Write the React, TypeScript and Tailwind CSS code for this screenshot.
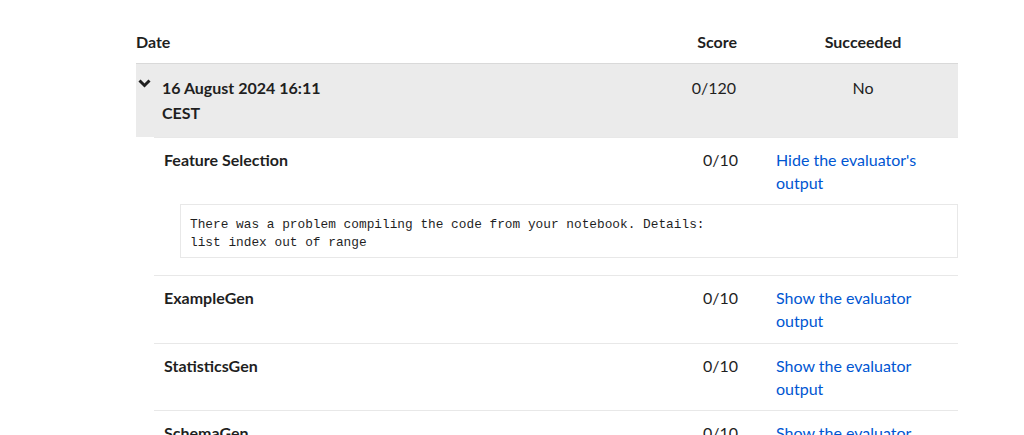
import React from "react";

const font = { fontFamily: 'Lato, "Open Sans", sans-serif' };

function SubRow({ name, link, children }: { name: string; link: string; children?: React.ReactNode }) {
  return (
    <div className="border-t border-[#e8e8e8] pt-[10px] pb-[10.5px]">
      <div className="flex">
        <div className="flex-1 pl-[10px] font-bold text-[16px] leading-[23px] text-[#1f1f1f]">{name}</div>
        <div className="w-[100px] text-right text-[16px] leading-[23px] text-[#1f1f1f]">0/10</div>
        <div className="w-[220px] pl-[38px] text-[16px] leading-[23px] text-[#0056d2]">{link}</div>
      </div>
      {children}
    </div>
  );
}

export default function App() {
  return (
    <div className="w-[1024px] h-[435px] overflow-hidden bg-white" style={font}>
      <div className="ml-[136px] w-[822px]">
        <div className="flex h-[63px] items-end pb-[9px] text-[16px] leading-[24px] font-bold text-[#1f1f1f]">
          <div className="flex-1">Date</div>
          <div className="w-[100px] text-right">Score</div>
          <div className="w-[221px] text-center pl-[31px]">Succeeded</div>
        </div>
        <div className="bg-[#ebebeb] border-t border-[#d9d9d9]">
          <div className="flex pt-[11px] pb-[12px] text-[16px] leading-[25px] text-[#1f1f1f]">
            <div className="w-[26px] pl-[2px] pt-[4px]">
              <svg width="13" height="9" viewBox="0 0 13 9">
                <path d="M1.5 1.5 L6.5 6.5 L11.5 1.5" fill="none" stroke="#1f1f1f" strokeWidth="3" />
              </svg>
            </div>
            <div className="flex-1 font-bold">
              16 August 2024 16:11
              <br />
              CEST
            </div>
            <div className="w-[100px] text-right pr-[1px]">0/120</div>
            <div className="w-[221px] text-center pl-[31px]">No</div>
          </div>
        </div>
        <div className="ml-[18px]">
          <SubRow name="Feature Selection" link="Hide the evaluator's output">
            <div
              className="ml-[26px] mt-[10px] mb-[6.5px] border border-[#e8e8e8] px-[9px] pt-[11px] pb-[5px] text-[12.8px] leading-[18px] text-[#1f1f1f]"
              style={{ fontFamily: '"Liberation Mono", monospace' }}
            >
              There was a problem compiling the code from your notebook. Details:
              <br />
              list index out of range
            </div>
          </SubRow>
          <SubRow name="ExampleGen" link="Show the evaluator output" />
          <SubRow name="StatisticsGen" link="Show the evaluator output" />
          <SubRow name="SchemaGen" link="Show the evaluator output" />
        </div>
      </div>
    </div>
  );
}
